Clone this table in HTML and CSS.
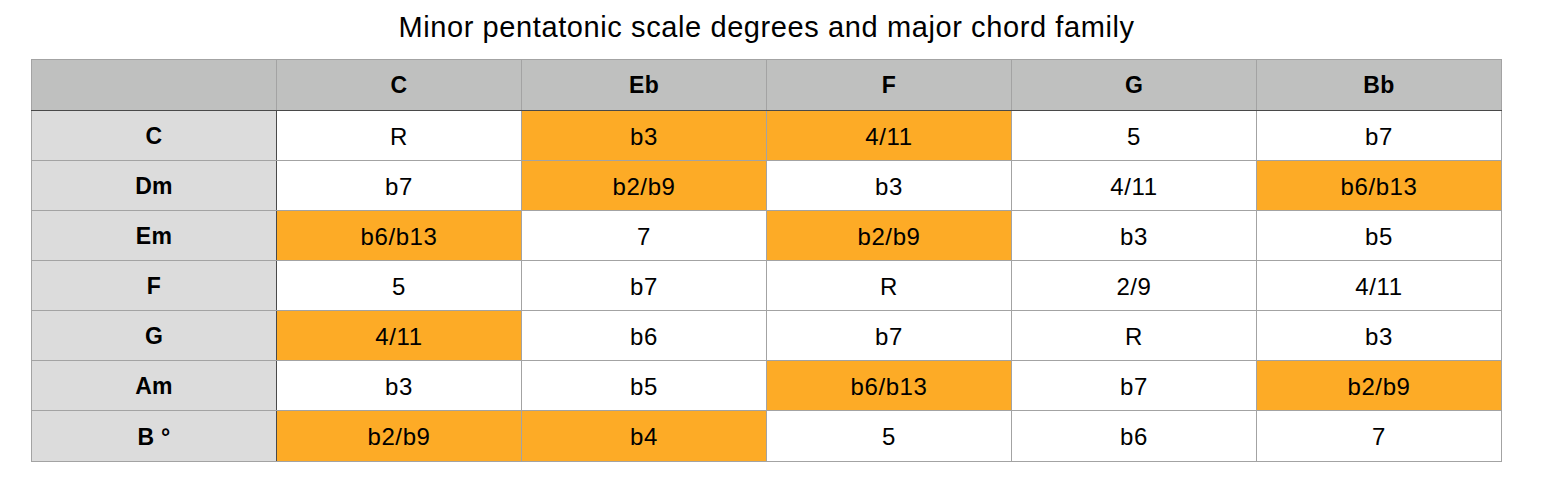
FILE: index.html
```html
<!DOCTYPE html>
<html>
<head>
<meta charset="utf-8">
<link rel="stylesheet" href="styles.css">
</head>
<body>
<div class="page">
  <h1 class="title">Minor pentatonic scale degrees and major chord family</h1>
  <table class="grid">
    <thead>
      <tr><th class="corner"></th><th>C</th><th>Eb</th><th>F</th><th>G</th><th>Bb</th></tr>
    </thead>
    <tbody>
      <tr><th>C</th><td>R</td><td class="hi">b3</td><td class="hi">4/11</td><td>5</td><td>b7</td></tr>
      <tr><th>Dm</th><td>b7</td><td class="hi">b2/b9</td><td>b3</td><td>4/11</td><td class="hi">b6/b13</td></tr>
      <tr><th>Em</th><td class="hi">b6/b13</td><td>7</td><td class="hi">b2/b9</td><td>b3</td><td>b5</td></tr>
      <tr><th>F</th><td>5</td><td>b7</td><td>R</td><td>2/9</td><td>4/11</td></tr>
      <tr><th>G</th><td class="hi">4/11</td><td>b6</td><td>b7</td><td>R</td><td>b3</td></tr>
      <tr><th>Am</th><td>b3</td><td>b5</td><td class="hi">b6/b13</td><td>b7</td><td class="hi">b2/b9</td></tr>
      <tr><th>B °</th><td class="hi">b2/b9</td><td class="hi">b4</td><td>5</td><td>b6</td><td>7</td></tr>
    </tbody>
  </table>
</div>
</body>
</html>
```
FILE: styles.css
```css
html, body { margin: 0; padding: 0; background: #fff; }
.page {
  padding: 0 0 0 31px;
  font-family: "Liberation Sans", Arial, sans-serif;
  color: #000;
}
.title {
  margin: 0;
  width: 1471px;
  height: 59px;
  line-height: 54px;
  font-size: 29px;
  letter-spacing: 0.6px;
  font-weight: normal;
  text-align: center;
}
.grid {
  border-collapse: collapse;
  table-layout: fixed;
  width: 1471px;
}
.grid th, .grid td {
  width: 245px;
  height: 50px;
  padding: 2px 0 0 0;
  border: 1px solid #a3a3a3;
  text-align: center;
  vertical-align: middle;
  font-size: 24px;
  letter-spacing: 0.6px;
  box-sizing: border-box;
}
.grid thead th {
  height: 51px;
  padding-top: 1px;
  background: #bfc0bf;
  font-weight: bold;
  font-size: 23px;
  letter-spacing: 0.3px;
  border-bottom: 1px solid #494949;
}
.grid tbody th {
  background: #dcdcdc;
  font-weight: bold;
  font-size: 23px;
  letter-spacing: 0.3px;
  border-right: 1px solid #494949;
}
.grid tbody tr:last-child th,
.grid tbody tr:last-child td {
  height: 51px;
}
.grid td.hi { background: #fdab26; }
```
